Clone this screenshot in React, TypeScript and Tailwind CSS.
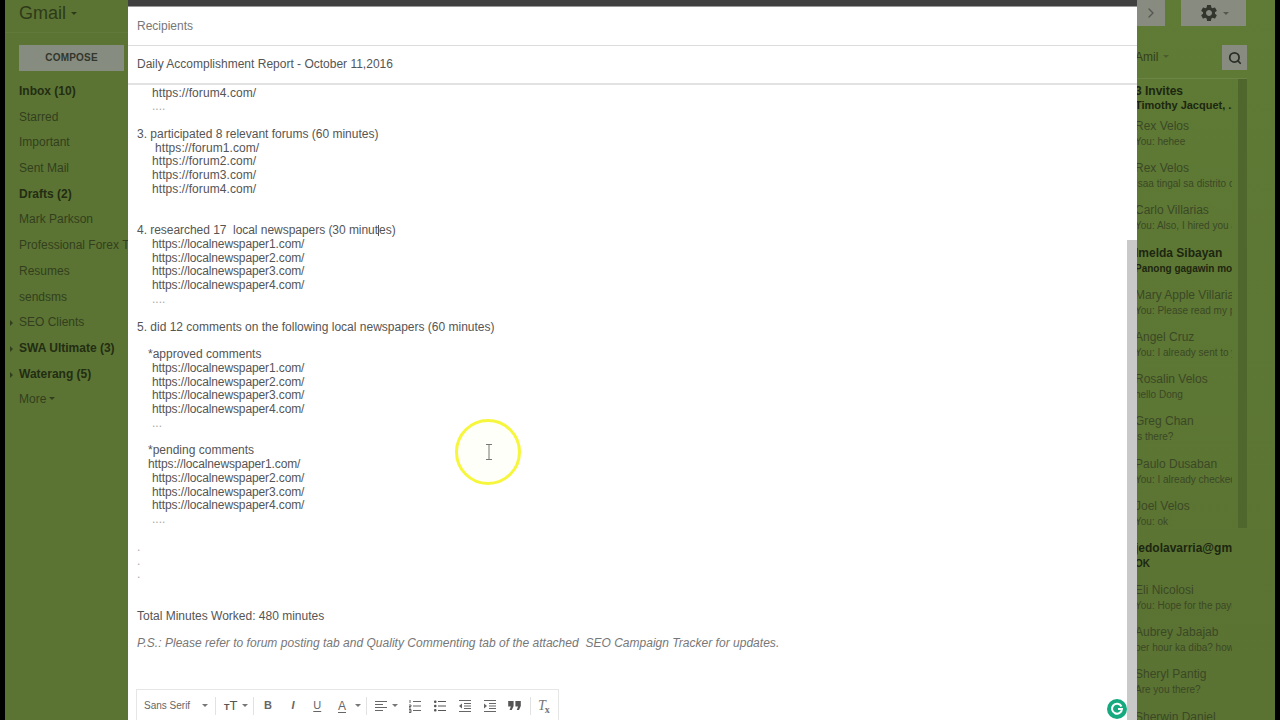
import React from 'react';
import { Search, ChevronRight } from 'lucide-react';
import { MdSettings } from 'react-icons/md';

interface BodyLine {
  text: string;
  indent?: 'link' | 'linkFar' | 'note';
}

const bodyLines: BodyLine[] = [
  { text: 'https://forum4.com/', indent: 'link' },
  { text: '....', indent: 'link' },
  { text: '' },
  { text: '3. participated 8 relevant forums (60 minutes)' },
  { text: 'https://forum1.com/', indent: 'linkFar' },
  { text: 'https://forum2.com/', indent: 'link' },
  { text: 'https://forum3.com/', indent: 'link' },
  { text: 'https://forum4.com/', indent: 'link' },
  { text: '' },
  { text: '' },
  { text: 'CARET' },
  { text: 'https://localnewspaper1.com/', indent: 'link' },
  { text: 'https://localnewspaper2.com/', indent: 'link' },
  { text: 'https://localnewspaper3.com/', indent: 'link' },
  { text: 'https://localnewspaper4.com/', indent: 'link' },
  { text: '....', indent: 'link' },
  { text: '' },
  { text: '5. did 12 comments on the following local newspapers (60 minutes)' },
  { text: '' },
  { text: '*approved comments', indent: 'note' },
  { text: 'https://localnewspaper1.com/', indent: 'link' },
  { text: 'https://localnewspaper2.com/', indent: 'link' },
  { text: 'https://localnewspaper3.com/', indent: 'link' },
  { text: 'https://localnewspaper4.com/', indent: 'link' },
  { text: '...', indent: 'link' },
  { text: '' },
  { text: '*pending comments', indent: 'note' },
  { text: 'https://localnewspaper1.com/', indent: 'note' },
  { text: 'https://localnewspaper2.com/', indent: 'link' },
  { text: 'https://localnewspaper3.com/', indent: 'link' },
  { text: 'https://localnewspaper4.com/', indent: 'link' },
  { text: '....', indent: 'link' },
  { text: '' },
  { text: '.' },
  { text: '.' },
  { text: '.' },
  { text: '' },
  { text: '' },
  { text: 'Total Minutes Worked: 480 minutes' },
  { text: '' },
];

const folders = [
  { label: 'Inbox (10)', bold: true },
  { label: 'Starred' },
  { label: 'Important' },
  { label: 'Sent Mail' },
  { label: 'Drafts (2)', bold: true },
  { label: 'Mark Parkson' },
  { label: 'Professional Forex Trading' },
  { label: 'Resumes' },
  { label: 'sendsms' },
  { label: 'SEO Clients', arrow: true },
  { label: 'SWA Ultimate (3)', bold: true, arrow: true },
  { label: 'Waterang (5)', bold: true, arrow: true },
];

const chats = [
  { name: 'Rex Velos', sub: 'You: hehee' },
  { name: 'Rex Velos', sub: 'Isaa tingal sa distrito c' },
  { name: 'Carlo Villarias', sub: 'You: Also, I hired you as' },
  { name: 'Imelda Sibayan', sub: 'Panong gagawin mo l', bold: true },
  { name: 'Mary Apple Villarias', sub: 'You: Please read my post' },
  { name: 'Angel Cruz', sub: 'You: I already sent to you' },
  { name: 'Rosalin Velos', sub: 'hello Dong' },
  { name: 'Greg Chan', sub: 'is there?' },
  { name: 'Paulo Dusaban', sub: 'You: I already checked' },
  { name: 'Joel Velos', sub: 'You: ok' },
  { name: 'jedolavarria@gmail.com', sub: 'OK', bold: true },
  { name: 'Eli Nicolosi', sub: 'You: Hope for the payment' },
  { name: 'Aubrey Jabajab', sub: 'per hour ka diba? how' },
  { name: 'Sheryl Pantig', sub: 'Are you there?' },
  { name: 'Sherwin Daniel', sub: '' },
];

const Caret = () => <span className="ml-[4px] inline-block h-0 w-0 border-x-[3px] border-t-[3px] border-x-transparent border-t-[#777] align-middle" />;

const Sep = () => <span className="mx-[5px] h-[18px] w-px bg-[#e2e2e2]" />;

const ToolbarIcon = ({ children }: { children: React.ReactNode }) => (
  <span className="flex w-[25px] items-center justify-center">{children}</span>
);

const Toolbar = () => (
  <div className="ml-[8px] flex h-[31px] w-[423px] items-center border-x border-t border-[#e6e6e6] bg-white pl-[7px] pt-[1px] text-[#666]">
    <span className="w-[48px] whitespace-nowrap text-[10px]">Sans Serif</span>
    <span className="ml-[6px] flex"><Caret /></span>
    <span className="ml-[2px] flex"><Sep /></span>
    <span className="ml-[3px] flex w-[14px] items-baseline text-[#555]">
      <span className="text-[9px] font-bold">T</span>
      <span className="text-[13px]">T</span>
    </span>
    <span className="flex"><Caret /></span>
    <Sep />
    <span className="-ml-[3.5px] flex w-[25px] justify-center text-[11px] font-bold">B</span>
    <span className="flex w-[25px] justify-center text-[11px] font-bold italic">I</span>
    <span className="flex w-[23.5px] justify-center text-[11px] underline underline-offset-2">U</span>
    <span className="flex w-[26px] justify-center text-[12px] underline underline-offset-2">A</span>
    <span className="-ml-[4px] flex"><Caret /></span>
    <Sep />
    <span className="ml-[3px] w-[13px]">
      <svg viewBox="0 0 12 12" className="h-[12px] w-[12px]" stroke="#666" strokeWidth="1"><path d="M0 1.5h12M0 4.5h8M0 7.5h12M0 10.5h8" /></svg>
    </span>
    <span className="flex"><Caret /></span>
    <span className="ml-[4px] flex">
      <ToolbarIcon>
        <svg viewBox="0 0 12 14" className="h-[14px] w-[12px]" stroke="#666" strokeWidth="1" fill="none"><path d="M4 2.5h8M4 7h8M4 11.5h8M1 1v3M0 6h2v1.5H0v1.5h2M0 10.5h2v3H0M0 12h2" /></svg>
      </ToolbarIcon>
      <ToolbarIcon>
        <svg viewBox="0 0 12 12" className="h-[12px] w-[12px]" fill="#555"><rect x="0" y="0.5" width="2.5" height="2.5" rx="1" /><rect x="0" y="4.75" width="2.5" height="2.5" rx="1" /><rect x="0" y="9" width="2.5" height="2.5" rx="1" /><path d="M4 1h8v1H4zM4 5.5h8v1H4zM4 10h8v1H4z" /></svg>
      </ToolbarIcon>
      <ToolbarIcon>
        <svg viewBox="0 0 12 12" className="h-[12px] w-[12px]" stroke="#666" strokeWidth="1" fill="none"><path d="M0 .5h12M5 3.5h7M5 6h7M5 8.5h7M0 11.5h12" /><path d="M3 3.5v5L0 6z" fill="#666" stroke="none" /></svg>
      </ToolbarIcon>
      <ToolbarIcon>
        <svg viewBox="0 0 12 12" className="h-[12px] w-[12px]" stroke="#666" strokeWidth="1" fill="none"><path d="M0 .5h12M5 3.5h7M5 6h7M5 8.5h7M0 11.5h12" /><path d="M0 3.5v5L3 6z" fill="#666" stroke="none" /></svg>
      </ToolbarIcon>
      <ToolbarIcon>
        <svg viewBox="0 0 14 10" className="h-[9px] w-[13px]" fill="#555"><path d="M0 0h6v5.5L4 10H1.5l1.5-4H0zM8 0h6v5.5L12 10H9.5l1.5-4H8z" /></svg>
      </ToolbarIcon>
    </span>
    <span className="-ml-[2px] flex"><Sep /></span>
    <span className="ml-[2px] font-['Liberation_Serif',serif] text-[14px] italic text-[#777]">
      T<sub className="-ml-[1px] text-[10px] font-bold not-italic">x</sub>
    </span>
  </div>
);

const App: React.FC = () => {
  return (
    <div className="relative flex h-[720px] w-[1280px] overflow-hidden bg-black px-[5px] font-['Liberation_Sans',Arial,sans-serif]">
      {/* Gmail folders, dimmed by the compose overlay */}
      <aside className="w-[123px] shrink-0 overflow-hidden bg-[#5b7434] text-[12px] text-[#333f1c]">
        <div className="mb-[12px] flex h-[33px] items-start border-b border-[#617a3b] pl-[14px] pt-[2px] text-[18px] leading-[22px] text-[#2e3a18]">
          Gmail
          <span className="ml-[5px] mt-[10px] h-0 w-0 border-x-[3px] border-t-[3px] border-x-transparent border-t-[#2e3a18]" />
        </div>
        <div className="ml-[14px] flex h-[26px] w-[105px] items-center justify-center bg-[#878c80] pb-[1px] text-[10px] font-bold tracking-[0.2px] text-[#33372c]">
          COMPOSE
        </div>
        <nav className="mt-[8px] pl-[14px]">
          {folders.map((f) => (
            <div
              key={f.label}
              className={`relative h-[25.7px] whitespace-nowrap leading-[25.7px] ${f.bold ? 'font-bold text-[#232d12]' : ''}`}
            >
              {f.arrow && (
                <span className="absolute left-[-9px] top-[10px] h-0 w-0 border-y-[3px] border-l-[3px] border-y-transparent border-l-[#333f1c]" />
              )}
              {f.label}
            </div>
          ))}
          <div className="flex h-[23px] items-center">
            More
            <span className="ml-[3px] h-0 w-0 border-x-[3px] border-t-[3px] border-x-transparent border-t-[#333f1c]" />
          </div>
        </nav>
      </aside>

      {/* Compose window */}
      <main className="z-10 flex w-[1009px] shrink-0 flex-col bg-white text-[12px] text-[#555]">
        <div className="h-[7px] shrink-0 border-b border-[#999] bg-[#404040]" />
        <div className="flex h-[39px] shrink-0 items-center border-b border-[#dcdcdc] pb-[1px] pl-[9px] text-[#777]">Recipients</div>
        <div className="flex h-[39px] shrink-0 items-center border-b-2 border-[#e2e2e2] pb-[2px] pl-[9px]">
          Daily Accomplishment Report - October 11,2016
        </div>
        <div className="relative min-h-0 flex-1 overflow-hidden">
          <div className="pl-[9px] pt-[1.5px] leading-[13.775px]">
            {bodyLines.map((line, i) => {
              if (line.text === 'CARET') {
                return (
                  <div key={i} className="h-[13.775px] whitespace-pre tracking-[-0.04px]">
                    4. researched 17  local newspapers (30 minut
                    <span className="inline-block h-[11px] w-0 border-l border-[#555] align-[-2px]" />
                    es)
                  </div>
                );
              }
              const indent =
                line.indent === 'link' ? 'pl-[15px]' : line.indent === 'linkFar' ? 'pl-[18px]' : line.indent === 'note' ? 'pl-[11px]' : '';
              const spacing = line.text.includes('localnewspaper')
                ? 'tracking-[-0.11px]'
                : line.text.includes('forum') && line.text.startsWith('https')
                  ? 'tracking-[0.08px]'
                  : '';
              const dots = /^\.+$/.test(line.text) ? 'text-[#aaa]' : '';
              return (
                <div key={i} className={`h-[13.775px] whitespace-pre ${indent} ${spacing} ${dots}`}>
                  {line.text}
                </div>
              );
            })}
            <div className="h-[13.775px] whitespace-pre italic tracking-[0.02px] text-[#777]">
              P.S.: Please refer to forum posting tab and Quality Commenting tab of the attached  SEO Campaign Tracker for updates.
            </div>
          </div>
          <div className="absolute bottom-0 left-0">
            <Toolbar />
          </div>
          {/* Scrollbar */}
          <div className="absolute bottom-0 right-0 top-[155px] w-[10px] bg-[#c9c9c9]" />
          {/* Grammarly badge */}
          <div className="absolute left-[979px] top-[614px] flex h-[20px] w-[20px] items-center justify-center rounded-full bg-[#15a97f]">
            <svg viewBox="0 0 14 14" className="h-[14px] w-[14px]" fill="none" stroke="#fff" strokeWidth="2">
              <path d="M11.5 4.5A5 5 0 1 0 12 7H8" />
            </svg>
          </div>
        </div>
      </main>

      {/* Chat list */}
      <aside className="relative flex w-[138px] shrink-0 flex-col overflow-hidden bg-gradient-to-b from-[#5f7b35] to-[#5a7232] text-[#333f1c]">
        <div className="flex h-[26px] shrink-0">
          <div className="flex w-[28px] items-center justify-center bg-[#878b80]">
            <ChevronRight size={16} strokeWidth={2} className="text-[#55584e]" />
          </div>
          <div className="ml-[16px] flex w-[65px] items-center justify-center bg-[#878b80]">
            <MdSettings size={20} className="text-[#33362d]" />
            <span className="ml-[4px] h-0 w-0 border-x-[3px] border-t-[3px] border-x-transparent border-t-[#55584e]" />
          </div>
        </div>
        <div className="mt-[19px] flex h-[25px] shrink-0 items-center justify-between pr-[28px] text-[12px]">
          <span className="-ml-[2px] flex items-center pb-[2px]">
            Amil
            <span className="ml-[5px] h-0 w-0 border-x-[3px] border-t-[3px] border-x-transparent border-t-[#4c5c2f]" />
          </span>
          <div className="flex h-[25px] w-[25px] items-center justify-center bg-[#878b80]">
            <Search size={14} strokeWidth={3} className="text-[#2b2e26]" />
          </div>
        </div>
        <div className="mr-[28px] mt-[8px] h-px shrink-0 bg-[#6c8446]" />
        <div className="flex min-h-0 flex-1">
          <div className="-ml-[2px] w-[97px] shrink-0 overflow-hidden pt-[5px]">
            <div className="h-[14px] whitespace-nowrap text-[12px] font-bold leading-[14px] text-[#1d2610]">3 Invites</div>
            <div className="mb-[6px] h-[14px] whitespace-nowrap text-[11px] font-bold leading-[14px] text-[#1d2610]">Timothy Jacquet, ...</div>
            {chats.map((c, i) => (
              <div key={i} className="h-[42.2px] whitespace-nowrap">
                <div className={`text-[12px] leading-[16px] ${c.bold ? 'font-bold text-[#1d2610]' : 'text-[#3b4826]'}`}>{c.name}</div>
                <div className={`text-[10px] leading-[16px] ${c.bold ? 'font-bold text-[#1d2610]' : 'text-[#3b4826]'}`}>{c.sub}</div>
              </div>
            ))}
          </div>
          <div className="ml-[6px] h-[449px] w-[9px] shrink-0 bg-[#4f662c]" />
        </div>
      </aside>

      {/* Screen recorder cursor highlight */}
      <div className="absolute left-[455px] top-[419px] z-20 flex h-[66px] w-[66px] items-center justify-center rounded-full border-[3px] border-[#f6f63c] bg-[#fffffa] pl-[1px]">
        <svg viewBox="0 0 8 16" className="h-[16px] w-[8px]" stroke="#777" strokeWidth="1" fill="none">
          <path d="M1 .5h6M1 15.5h6M4 .5v15" />
        </svg>
      </div>
    </div>
  );
};

export default App;
